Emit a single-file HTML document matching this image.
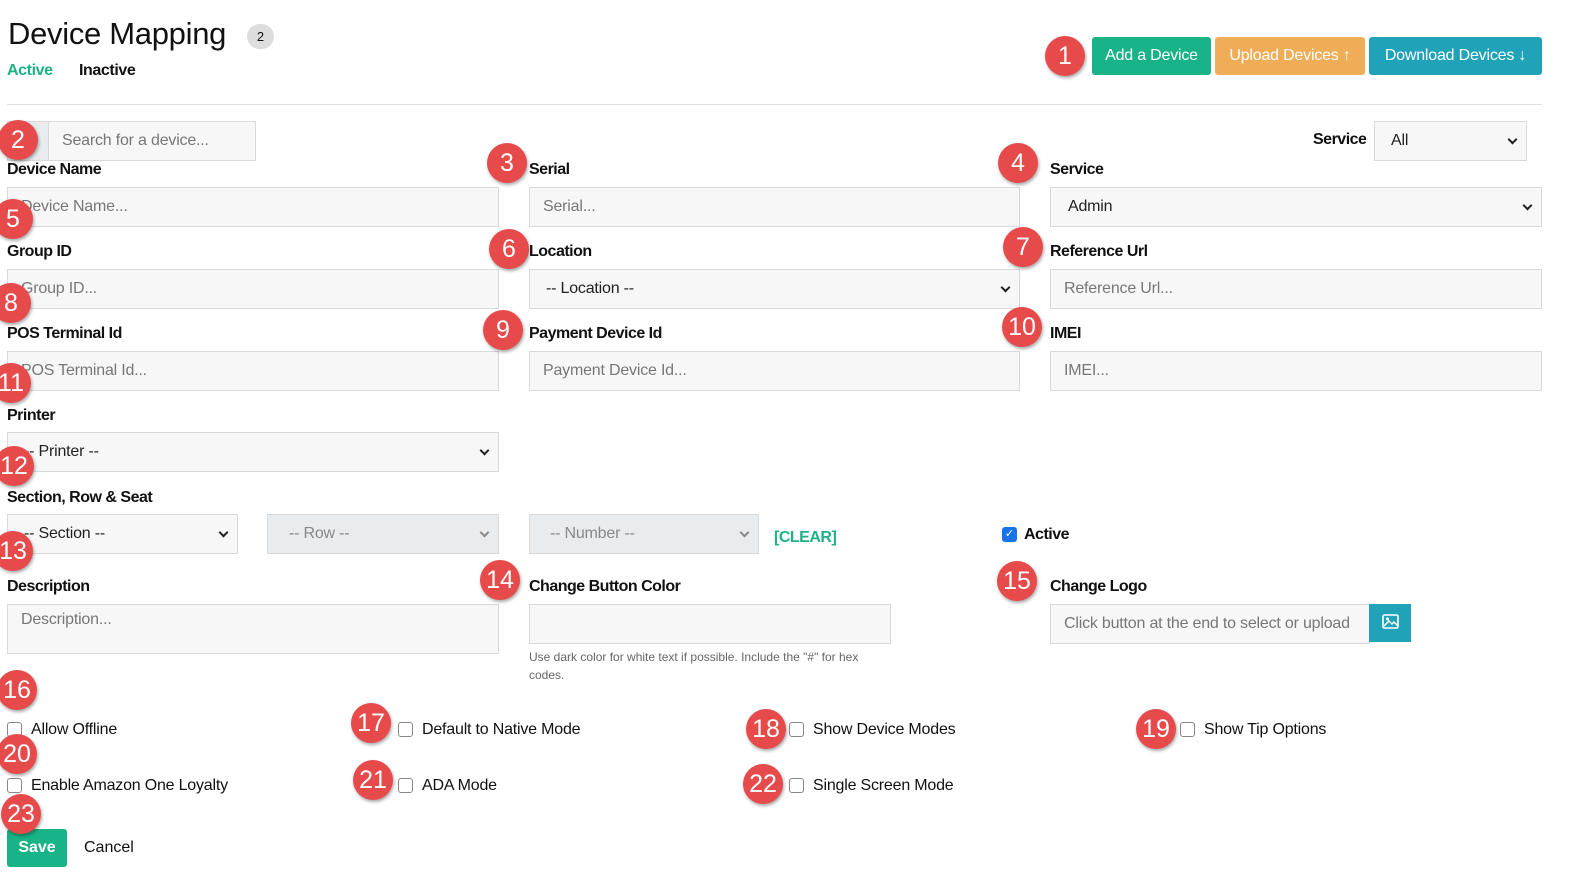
<!DOCTYPE html>
<html><head><meta charset="utf-8"><style>
*{box-sizing:border-box;margin:0;padding:0}
body{width:1571px;height:873px;background:#fff;font-family:"Liberation Sans",sans-serif;color:#111;position:relative;overflow:hidden}
.a{position:absolute}
.lbl{position:absolute;font-weight:bold;font-size:16px;letter-spacing:-0.5px;color:#111}
.in{position:absolute;height:40px;background:#f7f7f7;border:1px solid #d9d9d9;font-size:16px;color:#777;padding:0 13px;line-height:38px;letter-spacing:-0.2px;white-space:nowrap;overflow:hidden}
.sel{color:#222}
.sel:after{content:"";position:absolute;right:10px;top:14px;width:5px;height:5px;border-right:2px solid #222;border-bottom:2px solid #222;transform:rotate(45deg)}
.dis{background:#e9ecef;color:#888}
.dis:after{border-color:#888}
.c{position:absolute;width:40px;height:40px;border-radius:50%;background:#e64a4a;color:#fff;font-size:25px;text-align:center;line-height:40px;box-shadow:1px 2px 3px rgba(0,0,0,.35)}
.btn{position:absolute;top:37px;height:38px;border-radius:3px;color:#fff;font-size:16px;line-height:38px;text-align:center;letter-spacing:-0.2px}
.cb{position:absolute;width:15px;height:15px;border:1px solid #888;border-radius:3px;background:#fff}
.ct{position:absolute;font-size:16px;color:#111;letter-spacing:-0.2px}
</style></head><body>
<div class="a" style="left:8px;top:16px;font-size:31px;letter-spacing:-0.3px">Device Mapping</div>
<div class="a" style="left:247px;top:24px;width:27px;height:25px;border-radius:13px;background:#ddd;font-size:13px;text-align:center;line-height:25px">2</div>
<div class="a" style="left:7px;top:62px;font-size:16px;font-weight:bold;color:#1db386;letter-spacing:-0.4px">Active</div>
<div class="a" style="left:79px;top:62px;font-size:16px;font-weight:bold;letter-spacing:-0.4px">Inactive</div>
<div class="btn" style="left:1092px;width:119px;background:#18b386">Add a Device</div>
<div class="btn" style="left:1215px;width:150px;background:#f0ad58">Upload Devices ↑</div>
<div class="btn" style="left:1369px;width:173px;background:#20a3b8">Download Devices ↓</div>
<div class="a" style="left:7px;top:104px;width:1535px;height:1px;background:#e0e0e0"></div>

<div class="in" style="left:7px;top:121px;width:42px;background:#e9ecef"></div>
<div class="in" style="left:48px;top:121px;width:208px">Search for a device...</div>
<div class="lbl" style="left:1313px;top:131px">Service</div>
<div class="in sel" style="left:1374px;top:121px;width:153px;padding-left:16px">All</div>

<div class="lbl" style="left:7px;top:161px">Device Name</div>
<div class="lbl" style="left:529px;top:161px">Serial</div>
<div class="lbl" style="left:1050px;top:161px">Service</div>
<div class="in" style="left:7px;top:187px;width:492px">Device Name...</div>
<div class="in" style="left:529px;top:187px;width:491px">Serial...</div>
<div class="in sel" style="left:1050px;top:187px;width:492px;padding-left:17px">Admin</div>

<div class="lbl" style="left:7px;top:243px">Group ID</div>
<div class="lbl" style="left:529px;top:243px">Location</div>
<div class="lbl" style="left:1050px;top:243px">Reference Url</div>
<div class="in" style="left:7px;top:269px;width:492px">Group ID...</div>
<div class="in sel" style="left:529px;top:269px;width:491px;padding-left:16px">-- Location --</div>
<div class="in" style="left:1050px;top:269px;width:492px">Reference Url...</div>

<div class="lbl" style="left:7px;top:325px">POS Terminal Id</div>
<div class="lbl" style="left:529px;top:325px">Payment Device Id</div>
<div class="lbl" style="left:1050px;top:325px">IMEI</div>
<div class="in" style="left:7px;top:351px;width:492px">POS Terminal Id...</div>
<div class="in" style="left:529px;top:351px;width:491px">Payment Device Id...</div>
<div class="in" style="left:1050px;top:351px;width:492px">IMEI...</div>

<div class="lbl" style="left:7px;top:407px">Printer</div>
<div class="in sel" style="left:7px;top:432px;width:492px;padding-left:16px">-- Printer --</div>

<div class="lbl" style="left:7px;top:489px">Section, Row &amp; Seat</div>
<div class="in sel" style="left:7px;top:514px;width:231px;padding-left:16px">-- Section --</div>
<div class="in sel dis" style="left:267px;top:514px;width:232px;padding-left:21px">-- Row --</div>
<div class="in sel dis" style="left:529px;top:514px;width:230px;padding-left:20px">-- Number --</div>
<div class="a" style="left:774px;top:529px;font-size:16px;font-weight:bold;color:#1db386;letter-spacing:-0.5px">[CLEAR]</div>
<div class="a" style="left:1002px;top:527px;width:15px;height:15px;border-radius:3px;background:#1a73e8;color:#fff;font-size:11px;line-height:15px;text-align:center">✓</div>
<div class="lbl" style="left:1024px;top:526px">Active</div>

<div class="lbl" style="left:7px;top:578px">Description</div>
<div class="lbl" style="left:529px;top:578px">Change Button Color</div>
<div class="lbl" style="left:1050px;top:578px">Change Logo</div>
<div class="in" style="left:7px;top:604px;width:492px;height:50px;line-height:30px">Description...</div>
<div class="in" style="left:529px;top:604px;width:362px"></div>
<div class="a" style="left:529px;top:648px;font-size:12px;color:#666;line-height:18px;width:360px">Use dark color for white text if possible. Include the "#" for hex codes.</div>
<div class="in" style="left:1050px;top:604px;width:320px">Click button at the end to select or upload</div>
<div class="a" style="left:1369px;top:604px;width:42px;height:38px;background:#20a3b8">
<svg width="42" height="38" viewBox="0 0 42 38"><rect x="14" y="11" width="15" height="13" rx="1.5" fill="none" stroke="#fff" stroke-width="1.6"/><circle cx="18.5" cy="15" r="1.5" fill="#fff"/><path d="M15 22l5-5 3 3 2-2 4 4" fill="none" stroke="#fff" stroke-width="1.5"/></svg></div>

<div class="cb" style="left:7px;top:722px"></div><div class="ct" style="left:31px;top:721px">Allow Offline</div>
<div class="cb" style="left:398px;top:722px"></div><div class="ct" style="left:422px;top:721px">Default to Native Mode</div>
<div class="cb" style="left:789px;top:722px"></div><div class="ct" style="left:813px;top:721px">Show Device Modes</div>
<div class="cb" style="left:1180px;top:722px"></div><div class="ct" style="left:1204px;top:721px">Show Tip Options</div>
<div class="cb" style="left:7px;top:778px"></div><div class="ct" style="left:31px;top:777px">Enable Amazon One Loyalty</div>
<div class="cb" style="left:398px;top:778px"></div><div class="ct" style="left:422px;top:777px">ADA Mode</div>
<div class="cb" style="left:789px;top:778px"></div><div class="ct" style="left:813px;top:777px">Single Screen Mode</div>

<div class="a" style="left:7px;top:829px;width:60px;height:38px;background:#18b386;border-radius:3px;color:#fff;font-size:16px;font-weight:bold;line-height:38px;text-align:center">Save</div>
<div class="a" style="left:84px;top:839px;font-size:16px">Cancel</div>

<div class="c" style="left:1045px;top:36px">1</div>
<div class="c" style="left:-2px;top:120px">2</div>
<div class="c" style="left:487px;top:143px">3</div>
<div class="c" style="left:998px;top:143px">4</div>
<div class="c" style="left:-7px;top:199px">5</div>
<div class="c" style="left:489px;top:229px">6</div>
<div class="c" style="left:1003px;top:227px">7</div>
<div class="c" style="left:-9px;top:283px">8</div>
<div class="c" style="left:483px;top:310px">9</div>
<div class="c" style="left:1002px;top:307px">10</div>
<div class="c" style="left:-9px;top:363px">11</div>
<div class="c" style="left:-6px;top:446px">12</div>
<div class="c" style="left:-7px;top:531px">13</div>
<div class="c" style="left:480px;top:560px">14</div>
<div class="c" style="left:997px;top:561px">15</div>
<div class="c" style="left:-3px;top:670px">16</div>
<div class="c" style="left:351px;top:703px">17</div>
<div class="c" style="left:746px;top:709px">18</div>
<div class="c" style="left:1136px;top:709px">19</div>
<div class="c" style="left:-3px;top:734px">20</div>
<div class="c" style="left:353px;top:760px">21</div>
<div class="c" style="left:743px;top:764px">22</div>
<div class="c" style="left:1px;top:794px">23</div>
</body></html>
